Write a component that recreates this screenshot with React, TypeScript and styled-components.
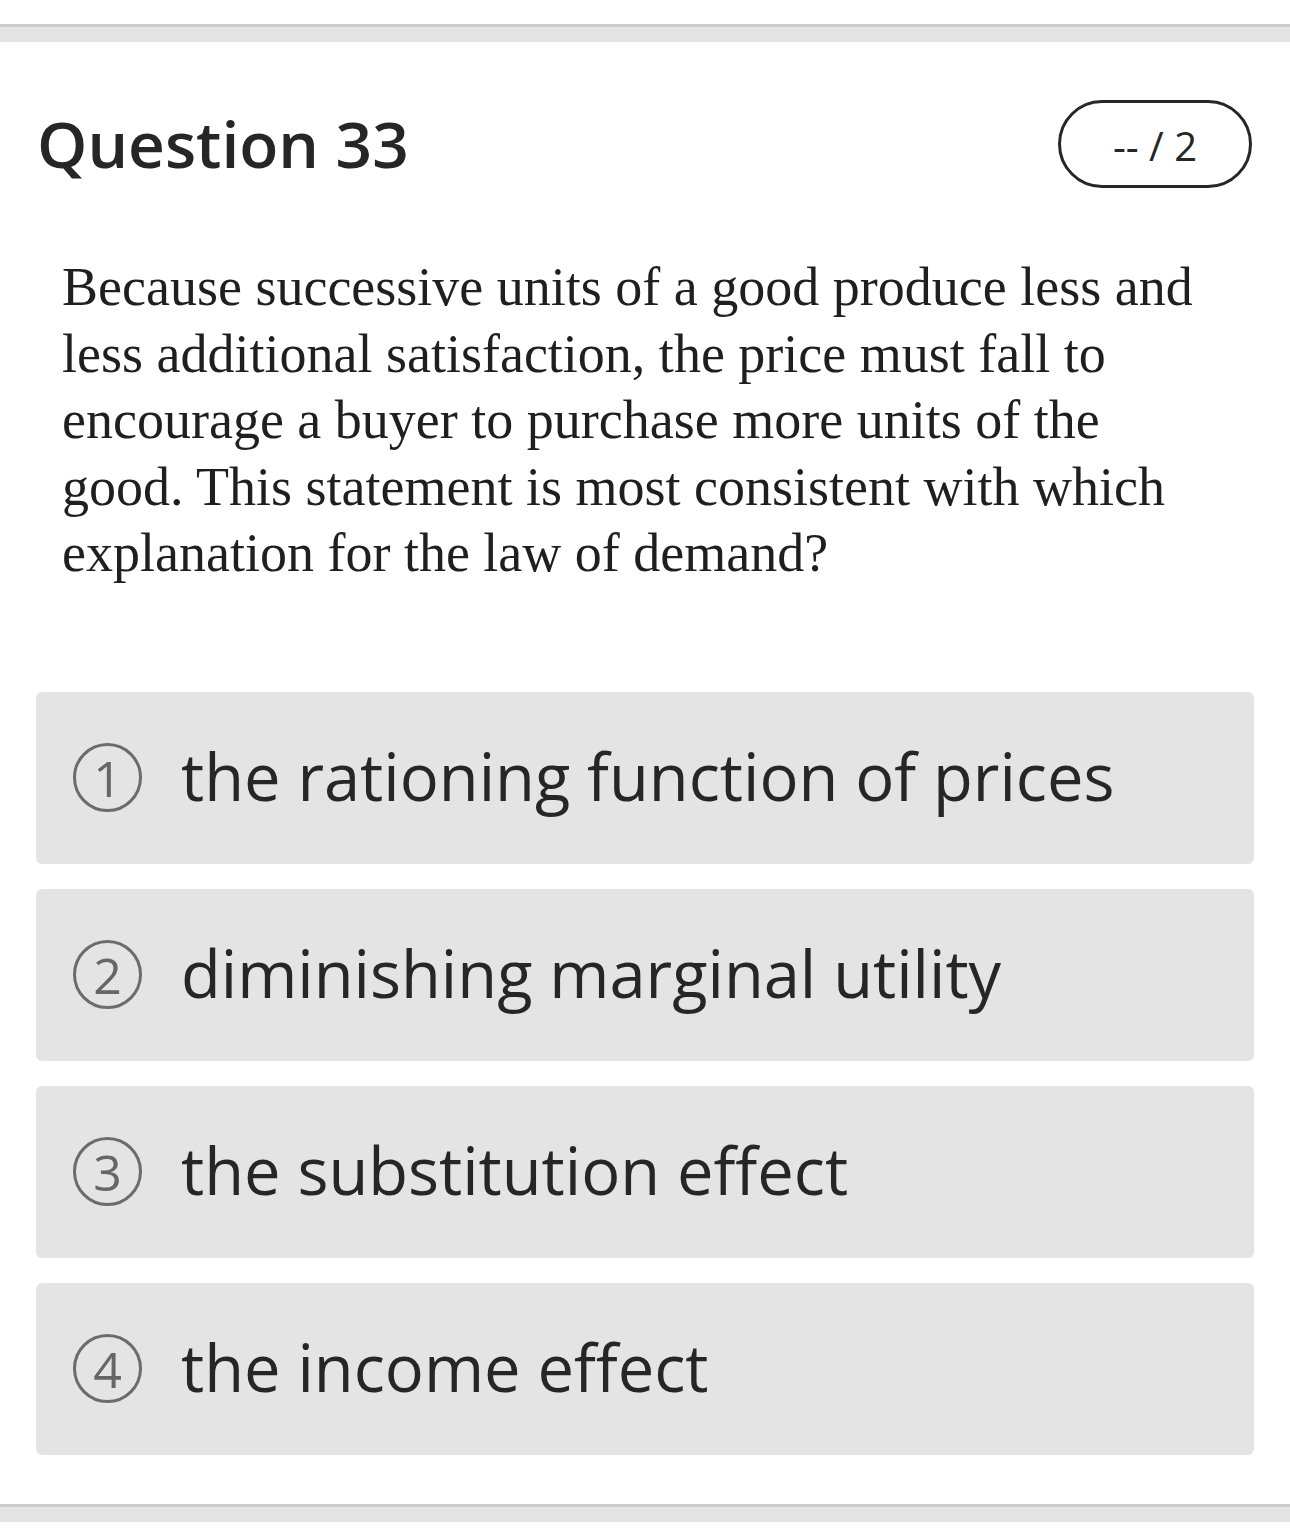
import styled, { createGlobalStyle } from "styled-components";

const GlobalStyle = createGlobalStyle`
  html, body {
    margin: 0;
    padding: 0;
    background: #ffffff;
  }
  body {
    font-family: "Open Sans", "Liberation Sans", sans-serif;
    color: #222222;
  }
`;

const Page = styled.div`
  width: 1290px;
  min-height: 1533px;
  background: #ffffff;
  padding-top: 24px;
  box-sizing: border-box;
`;

const Band = styled.div`
  height: 15px;
  background: #e3e3e3;
  border-top: 3px solid #cccccc;
`;

const Card = styled.div`
  padding: 58px 36px 49px 36px;
`;

const Header = styled.div`
  display: flex;
  align-items: center;
  justify-content: space-between;
  padding-left: 1px;
`;

const Title = styled.h1`
  margin: 0;
  font-family: "Open Sans", sans-serif;
  font-weight: 600;
  font-size: 64px;
  line-height: 88px;
  color: #262626;
`;

const ScorePill = styled.div`
  width: 194px;
  height: 88px;
  box-sizing: border-box;
  border: 3px solid #262626;
  border-radius: 44px;
  display: flex;
  align-items: center;
  justify-content: center;
  margin-right: 2px;
  font-size: 40px;
  color: #262626;
  padding-top: 2px;
`;

const Prompt = styled.p`
  margin: 66px 0 0 26px;
  max-width: 1150px;
  font-family: "Liberation Serif", "Times New Roman", serif;
  font-size: 54px;
  line-height: 66.5px;
  color: #1f1f1f;
`;

const Options = styled.div`
  margin-top: 105px;
  display: flex;
  flex-direction: column;
  gap: 25px;
`;

const Option = styled.div`
  height: 172px;
  background: #e4e4e4;
  border-radius: 6px;
  display: flex;
  align-items: center;
  padding-left: 37px;
`;

const Badge = styled.span`
  width: 69px;
  height: 69px;
  box-sizing: border-box;
  border: 3px solid #6b6b6b;
  border-radius: 50%;
  display: flex;
  align-items: center;
  justify-content: center;
  font-size: 50px;
  line-height: 1;
  font-weight: 500;
  color: #666666;
  flex-shrink: 0;
`;

const OptionText = styled.span`
  margin-left: 39px;
  font-size: 65px;
  color: #262626;
  margin-top: -3px;
`;

const options = [
  "the rationing function of prices",
  "diminishing marginal utility",
  "the substitution effect",
  "the income effect",
];

export default function App() {
  return (
    <>
      <GlobalStyle />
      <Page>
        <Band />
        <Card>
          <Header>
            <Title>Question 33</Title>
            <ScorePill>-- / 2</ScorePill>
          </Header>
          <Prompt>
            Because successive units of a good produce less and less additional
            satisfaction, the price must fall to encourage a buyer to purchase
            more units of the good. This statement is most consistent with
            which explanation for the law of demand?
          </Prompt>
          <Options>
            {options.map((text, i) => (
              <Option key={text}>
                <Badge>{i + 1}</Badge>
                <OptionText>{text}</OptionText>
              </Option>
            ))}
          </Options>
        </Card>
        <Band />
      </Page>
    </>
  );
}
